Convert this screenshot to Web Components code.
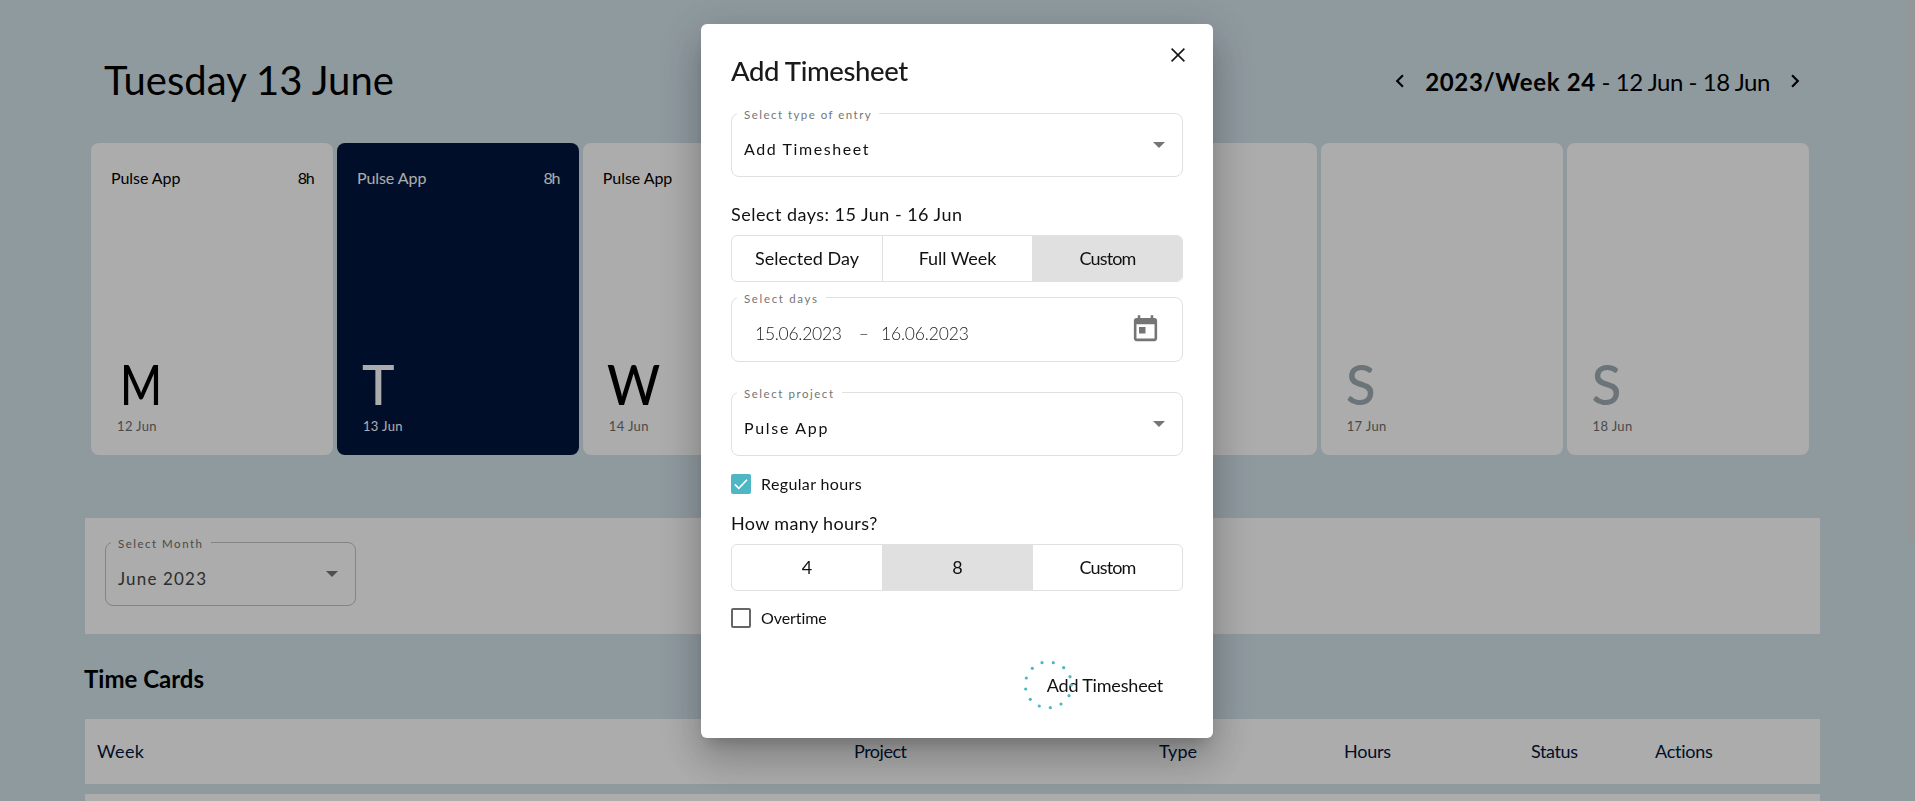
<!DOCTYPE html>
<html lang="en"><head><meta charset="utf-8"><title>Add Timesheet</title>
<style>html,body{margin:0;height:801px;overflow:hidden;background:#d4e4ec;font-family:Lato,"Liberation Sans",sans-serif}</style>
</head><body>
<time-page></time-page>
<add-dialog></add-dialog>
<script>
const cv=document.createElement('canvas').getContext('2d');
function T(text,size,width,weight=400,extra=''){
  cv.font=`${weight} ${size}px Lato`;
  const m=cv.measureText(text).width;
  const ls=width&&text.length>1?(width-m)/(text.length-1):0;
  return `<span style="font-size:${size}px;font-weight:${weight};letter-spacing:${ls.toFixed(3)}px;white-space:pre;${extra}">${text}</span>`;
}
function comp(name,render){
  customElements.define(name,class extends HTMLElement{
    constructor(){super();this.attachShadow({mode:'open'});}
    connectedCallback(){this.shadowRoot.innerHTML=render(this);}
  });
}
const arrow=`<svg class="arrow" width="12" height="6" viewBox="0 0 12 6"><path d="M0 0h12L6 6z" fill="#757575"/></svg>`;

comp('outlined-field',h=>{
 const a=n=>h.getAttribute(n);
 return `<style>
 :host{display:flex;position:relative;box-sizing:border-box;align-items:center;height:${a('h')}px;width:${a('width')||'100%'};border:1px solid var(--line,#e0e0e0);border-radius:8px;padding:${a('pt')||9}px 17px 0 12px;background:transparent}
 .lab{position:absolute;left:5px;top:-8px;padding:0 7px;line-height:14px;background:var(--notch,#fff);color:var(--lab,#757575);display:block}
 .val{flex:1;color:var(--val,#111);display:block;line-height:20px}
 .arrow{display:block;margin-bottom:${a('am')||9}px;flex:none}
 </style><span class="lab">${T(a('label'),11.5,+a('lw'))}</span><span class="val"><slot></slot></span>${arrow}`;
});

comp('toggle-group',h=>{
 const items=h.getAttribute('items').split('|');const sel=+h.getAttribute('sel');const ws=(h.getAttribute('tw')||'').split('|');
 return `<style>
 :host{display:flex;box-sizing:border-box;height:47px;border:1px solid #e0e0e0;border-radius:6px;overflow:hidden}
 div{display:flex;align-items:center;justify-content:center;color:#111;padding-bottom:2px}
 div:nth-of-type(1){flex:0 0 150px;border-right:1px solid #e0e0e0}
 div:nth-of-type(2){flex:0 0 149px;border-right:1px solid #e0e0e0}
 div:nth-of-type(3){flex:1}
 .on{background:#e0e0e0}
 </style>`+items.map((t,i)=>`<div class="${i==sel?'on':''}">${T(t,18,+ws[i])}</div>`).join('');
});

comp('check-row',h=>{
 const on=h.hasAttribute('checked');
 return `<style>
 :host{display:flex;align-items:center;height:20px;gap:11px;color:#111}
 .b{box-sizing:border-box;width:20px;height:20px;border-radius:2px;flex:none;display:flex}
 .on{background:#4fb6c4}.off{border:2px solid #666}
 .t{padding-bottom:2px;margin-left:-1px}
 </style><span class="b ${on?'on':'off'}">${on?`<svg width="20" height="20" viewBox="0 0 20 20"><path d="M3.8 10.4l4 4 8.2-8.6" fill="none" stroke="#fff" stroke-width="1.6"/></svg>`:''}</span><span class="t">${T(h.getAttribute('label'),16,+h.getAttribute('tw'))}</span>`;
});

comp('dot-ring',()=>{
 const pts=[[129,68],[163,68],[194,83],[213,110],[217,135],[210,167],[186,192],[154,203],[121,198],[94,178],[80,147],[82,114],[100,85]];
 return `<style>:host{position:absolute;left:-28px;top:-18px;width:60px;height:60px;display:block;pointer-events:none}svg{display:block}</style>
 <svg width="60" height="60" viewBox="0 0 60 60">${pts.map(p=>`<circle cx="${(p[0]/3-20).toFixed(1)}" cy="${(p[1]/3-15).toFixed(1)}" r="1.6" fill="#4fb6c4"/>`).join('')}</svg>`;
});

comp('day-card',h=>{
 const a=n=>h.getAttribute(n);const dark=h.hasAttribute('active');const weekend=h.hasAttribute('weekend');
 const scale=a('sx')||1;
 return `<style>
 :host{display:flex;flex-direction:column;box-sizing:border-box;height:312px;border-radius:8px;background:${dark?'#02163d':'#fff'};color:${dark?'#fff':'#000'};padding:0 20px 0 20px}
 .top{display:flex;justify-content:space-between;height:24px;line-height:24px;margin-top:23px;align-items:center}
 .big{margin-top:auto;height:60px;line-height:60px;padding-left:${a('bp')||5}px;color:${weekend?'#9fadb2':'inherit'}}
 .big span{display:inline-block;transform:scaleX(${scale});transform-origin:left center}
 .d{height:20px;line-height:20px;margin:1px 0 20px 6px;color:${dark?'#fff':'#6e6e6e'}}
 </style><div class="top">${a('project')?T(a('project'),16,70)+T('8h',16,17):''}</div>
 <div class="big">${T(a('letter'),55,0,500)}</div><div class="d">${T(a('date'),13,40)}</div>`;
});

comp('week-header',()=>`<style>
 :host{display:flex;align-items:center;justify-content:space-between;box-sizing:content-box;height:72px;padding:44px 12px 27px 19px;color:#000}
 .nav{display:flex;align-items:center;padding-top:2px}
 svg{display:block;flex:none}
 </style>${T('Tuesday 13 June',40,292)}
 <div class="nav"><svg width="26" height="26" viewBox="0 0 24 24" style="margin-right:12px"><path d="M15.41 7.41 14 6l-6 6 6 6 1.41-1.41L10.83 12z"/></svg>
 ${T('2023/Week 24',24,170,700)}${T(' - 12 Jun - 18 Jun',24,176)}
 <svg width="26" height="26" viewBox="0 0 24 24" style="margin-left:12px"><path d="M10 6 8.59 7.41 13.17 12l-4.58 4.59L10 18l6-6z"/></svg></div>`);

comp('time-table',()=>`<style>
 :host{display:block}
 .r{display:grid;grid-template-columns:757px 305px 185px 187px 124px 1fr;align-items:center;box-sizing:border-box;height:65px;padding:0 0 2px 12px;background:#fff;color:#02163d}
 .r2{height:40px;margin-top:10px;background:#fff}
 </style><div class="r"><span>${T('Week',18,47)}</span><span>${T('Project',18,53)}</span><span>${T('Type',18,38)}</span><span>${T('Hours',18,47)}</span><span>${T('Status',18,47)}</span><span>${T('Actions',18,58)}</span></div><div class="r2"></div>`);

comp('time-page',()=>`<style>
 :host{display:block;height:801px;overflow:hidden;position:relative;box-sizing:border-box;padding-left:85px;width:1820px}
 .days{display:grid;grid-template-columns:repeat(7,1fr);gap:3.5px;margin:0 11px 0 6px}
 .panel{margin-top:63px;height:116px;box-sizing:border-box;padding:24px 20px;background:#fff;--line:#c4c4c4;--lab:#6e6e6e;--val:#444}
 h2{margin:0 0 0 -1px;height:85px;box-sizing:border-box;padding-top:3px;display:flex;align-items:center;color:#000;font-weight:400}
 .thumb{position:fixed;right:0;top:0;width:8px;height:541px;border-radius:0 0 4px 4px;background:#dcdfe2}
 </style>
 <week-header></week-header>
 <div class="days">
 <day-card project="Pulse App" letter="M" date="12 Jun" sx=".82" bp="9"></day-card>
 <day-card project="Pulse App" letter="T" date="13 Jun" active></day-card>
 <day-card project="Pulse App" letter="W" date="14 Jun" sx=".93" bp="4"></day-card>
 <day-card project="Pulse App" letter="T" date="15 Jun"></day-card>
 <day-card letter="F" date="16 Jun"></day-card>
 <day-card letter="S" date="17 Jun" weekend></day-card>
 <day-card letter="S" date="18 Jun" weekend></day-card>
 </div>
 <div class="panel"><outlined-field width="251px" h="64" label="Select Month" lw="84">${T('June 2023',17,88)}</outlined-field></div>
 <h2>${T('Time Cards',24,120,700)}</h2>
 <time-table></time-table>
 <div class="thumb"></div>`);

comp('add-dialog',()=>`<style>
 :host{position:fixed;inset:0;display:block;background:rgba(0,0,0,.325);z-index:10}
 .m{position:absolute;left:701px;top:24px;width:512px;height:714px;box-sizing:border-box;padding:29px 30px 0;background:#fff;border-radius:6px;color:#111;
   box-shadow:0 11px 15px -7px rgba(0,0,0,.2),0 24px 38px 3px rgba(0,0,0,.14),0 9px 46px 8px rgba(0,0,0,.12)}
 .x{position:absolute;right:23px;top:19px;display:block}
 .title{height:37px;line-height:35px;margin-bottom:23px;color:#1a1a1a}
 .lab{height:24px;line-height:22px;color:#111}
 .btn{position:relative;line-height:24px;height:24px;color:#111;display:block}
 .foot{display:flex;justify-content:flex-end;padding-right:20px;margin-top:45px}
 .dv{display:flex;box-sizing:border-box;position:relative;align-items:center;height:65px;margin-top:15px;border:1px solid #e0e0e0;border-radius:8px;padding:9px 0 0 23px;justify-content:space-between}
 .dv .l{position:absolute;left:5px;top:-8px;padding:0 7px;line-height:14px;background:#fff;color:#757575}
 .dv .v{color:#222;line-height:22px;display:flex;align-items:center}
 .dv .dash{margin:0 12px 0 17px}
 .dv svg{margin:-9px 21px 0 0;display:block}
 </style><div class="m" role="dialog">
 <svg class="x" width="24" height="24" viewBox="0 0 24 24"><path stroke="#111" stroke-width="1.5" fill="none" d="M5.6 5.6 18.4 18.4M18.4 5.6 5.6 18.4"/></svg>
 <div class="title">${T('Add Timesheet',27.5,178,500)}</div>
 <outlined-field h="64" pt="7" am="7" label="Select type of entry" lw="127">${T('Add Timesheet',16,125)}</outlined-field>
 <div class="lab" style="margin-top:26px">${T('Select days: 15 Jun - 16 Jun',18,232)}</div>
 <toggle-group style="margin-top:8px" items="Selected Day|Full Week|Custom" sel="2" tw="104|78|57"></toggle-group>
 <div class="dv"><span class="l">${T('Select days',11.5,73)}</span><span class="v">${T('15.06.2023',17.5,87,300)}<span class="dash">${T('–',17.5,0,300)}</span>${T('16.06.2023',17.5,88,300)}</span>
 <svg width="31" height="31" viewBox="0 0 24 24"><path fill="#757575" d="M19 3h-1V1h-2v2H8V1H6v2H5c-1.11 0-1.99.9-1.99 2L3 19c0 1.1.89 2 2 2h14c1.1 0 2-.9 2-2V5c0-1.1-.9-2-2-2h0zm0 16H5V8h14v11zM7 10h5v5H7z"/></svg></div>
 <outlined-field style="margin-top:30px" h="64" pt="7" am="7" label="Select project" lw="89">${T('Pulse App',16,84)}</outlined-field>
 <check-row style="margin-top:18px" label="Regular hours" tw="101" checked></check-row>
 <div class="lab" style="margin-top:17px;line-height:24px">${T('How many hours?',18,147)}</div>
 <toggle-group style="margin-top:9px" items="4|8|Custom" sel="1" tw="0|0|57"></toggle-group>
 <check-row style="margin-top:17px" label="Overtime" tw="66"></check-row>
 <div class="foot"><div class="btn">${T('Add Timesheet',18,117)}<dot-ring></dot-ring></div></div>
 </div>`);
</script>
</body></html>
